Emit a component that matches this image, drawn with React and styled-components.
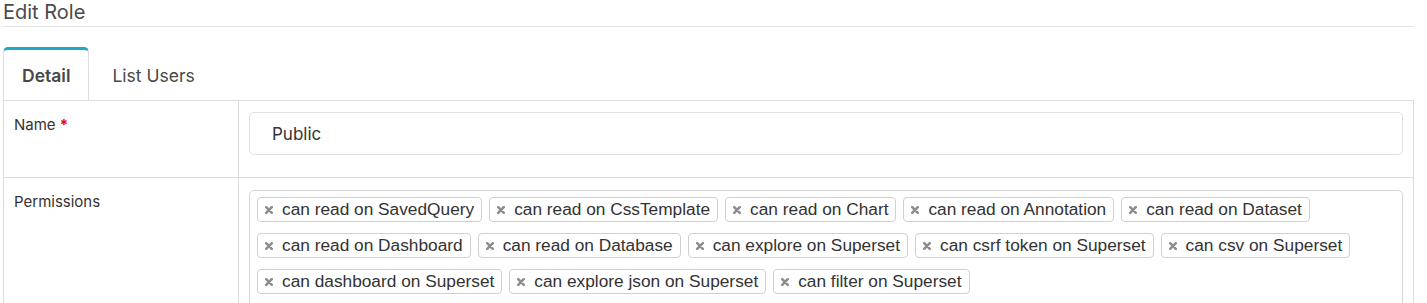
import React from "react";
import styled, { createGlobalStyle } from "styled-components";

const permissions = [
  "can read on SavedQuery",
  "can read on CssTemplate",
  "can read on Chart",
  "can read on Annotation",
  "can read on Dataset",
  "can read on Dashboard",
  "can read on Database",
  "can explore on Superset",
  "can csrf token on Superset",
  "can csv on Superset",
  "can dashboard on Superset",
  "can explore json on Superset",
  "can filter on Superset",
];

const GlobalStyle = createGlobalStyle`
  html, body {
    margin: 0;
    background: #fff;
    font-family: Inter, "Noto Sans", sans-serif;
    color: #333;
  }
`;

const RemoveIcon = () => (
  <svg width="8" height="8" viewBox="0 0 8 8">
    <path d="M1.2 1.2 L6.8 6.8 M6.8 1.2 L1.2 6.8" stroke="#8c8c8c" strokeWidth="2.5" strokeLinecap="round" />
  </svg>
);

const App = () => {
  return (
    <Page>
      <GlobalStyle />
      <Title>Edit Role</Title>

      <TabList>
        <Tab active>Detail</Tab>
        <Tab>List Users</Tab>
      </TabList>

      <FormTable>
        <tbody>
          <tr>
            <LabelCell>
              Name <Required>*</Required>
            </LabelCell>
            <FieldCell pad="11px 10px 22px">
              <TextInput defaultValue="Public" />
            </FieldCell>
          </tr>
          <tr>
            <LabelCell>Permissions</LabelCell>
            <FieldCell pad="12px 10px 12px">
              <TagBox>
                {permissions.map((p) => (
                  <Tag key={p}>
                    <TagRemove>
                      <RemoveIcon />
                    </TagRemove>
                    {p}
                  </Tag>
                ))}
              </TagBox>
            </FieldCell>
          </tr>
        </tbody>
      </FormTable>
    </Page>
  );
};

export default App;

const Page = styled.div`
  padding: 0 13px 0 3px;
`;

const Title = styled.h1`
  margin: 0;
  height: 26px;
  font-size: 20px;
  font-weight: 400;
  line-height: 24px;
  color: #4a4a4a;
  border-bottom: 1px solid #e3e3e3;
`;

const TabList = styled.div`
  display: flex;
  margin-top: 20px;
`;

const Tab = styled.div`
  height: 50px;
  display: flex;
  align-items: center;
  padding: 0 ${(p) => (p.active ? "18px" : "22px")};
  font-size: 17.5px;
  font-weight: ${(p) => (p.active ? 600 : 400)};
  color: #484848;
  border: 1px solid ${(p) => (p.active ? "#ddd" : "transparent")};
  border-top: 3px solid ${(p) => (p.active ? "#20a7c9" : "transparent")};
  border-bottom: none;
  border-radius: 5px 5px 0 0;
`;

const FormTable = styled.table`
  width: 100%;
  border-collapse: collapse;
  td {
    border: 1px solid #ddd;
    vertical-align: top;
  }
`;

const LabelCell = styled.td`
  width: 214px;
  padding: 14px 10px;
  font-size: 15px;
  line-height: 20px;
  color: #333;
`;

const Required = styled.span`
  color: #e00;
  font-weight: 700;
`;

const FieldCell = styled.td`
  padding: ${(p) => p.pad};
`;

const TextInput = styled.input`
  box-sizing: border-box;
  width: 100%;
  height: 43px;
  padding: 0 22px;
  border: 1px solid #e2e2e2;
  border-radius: 5px;
  font-family: Inter, "Noto Sans", sans-serif;
  font-size: 17px;
  color: #333;
  outline: none;
`;

const TagBox = styled.div`
  display: flex;
  flex-wrap: wrap;
  gap: 11px 7px;
  padding: 6px 8px 14px 7px;
  border: 1px solid #d6d6d6;
  border-radius: 5px;
`;

const Tag = styled.span`
  display: inline-flex;
  align-items: center;
  height: 23px;
  padding: 0 7px 0 6px;
  border: 1px solid #d0d0d0;
  border-radius: 4px;
  font-family: "Liberation Sans", Arial, sans-serif;
  font-size: 17.3px;
  color: #333;
`;

const TagRemove = styled.span`
  display: inline-flex;
  margin: 0 9px 0 1px;
`;
